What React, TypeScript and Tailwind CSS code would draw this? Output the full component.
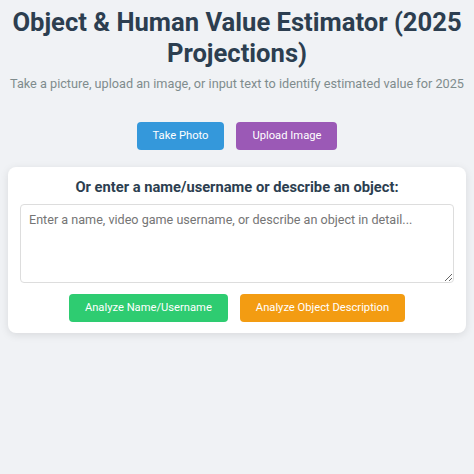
import React from "react";

const App: React.FC = () => {
  return (
    <div
      className="min-h-screen w-full bg-[#f0f2f5] text-[#2c3e50] px-2"
      style={{ fontFamily: "Roboto, 'Liberation Sans', sans-serif" }}
    >
      <header className="pt-[7px] text-center">
        <h1 className="text-[25.6px] font-bold leading-[1.2] text-[#2c3e50]">
          Object &amp; Human Value Estimator (2025 Projections)
        </h1>
        <p className="mt-[8px] text-[12.7px] leading-[15px] text-[#7f8c8d] whitespace-nowrap">
          Take a picture, upload an image, or input text to identify estimated value for 2025
        </p>
      </header>

      <div className="mt-[31px] flex justify-center gap-[12px]">
        <button className="h-[28px] px-[16px] rounded-[4px] bg-[#3498db] text-white text-[11.2px]">
          Take Photo
        </button>
        <button className="h-[28px] px-[16px] rounded-[4px] bg-[#9b59b6] text-white text-[11.2px]">
          Upload Image
        </button>
      </div>

      <section className="mt-[17px] bg-white rounded-[8px] shadow-[0_2px_8px_rgba(0,0,0,0.1)] px-[12px] pt-[12px] pb-[11px]">
        <h2 className="text-center text-[14.7px] font-bold leading-[17px] text-[#2c3e50]">
          Or enter a name/username or describe an object:
        </h2>
        <textarea
          className="mt-[8px] block w-full h-[79px] rounded-[4px] border border-[#dddddd] px-[8px] pt-[7px] text-[12.6px] leading-[15px] text-[#2c3e50] placeholder:text-[#757575] outline-none"
          placeholder="Enter a name, video game username, or describe an object in detail..."
        />
        <div className="mt-[11px] flex justify-center gap-[12px]">
          <button className="h-[28px] px-[16px] rounded-[4px] bg-[#2ecc71] text-white text-[11.2px]">
            Analyze Name/Username
          </button>
          <button className="h-[28px] px-[16px] rounded-[4px] bg-[#f39c12] text-white text-[11.2px]">
            Analyze Object Description
          </button>
        </div>
      </section>
    </div>
  );
};

export default App;
